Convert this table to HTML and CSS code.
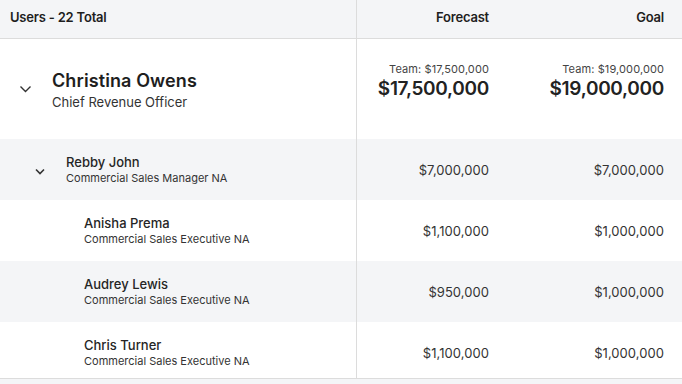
FILE: index.html
```html
<!DOCTYPE html>
<html>
<head>
<meta charset="utf-8">
<link rel="stylesheet" href="styles.css">
</head>
<body>
<div class="table">
  <div class="viewport">
    <div class="row head">
      <div class="cell name-cell"><span class="head-title">Users - 22 Total</span></div>
      <div class="cell num fc">Forecast</div>
      <div class="cell num goal">Goal</div>
    </div>
    <div class="row top">
      <div class="cell name-cell lvl0">
        <svg class="chev big" viewBox="0 0 12 8"><path d="M1 1.5 L6 6.5 L11 1.5" fill="none" stroke="#333" stroke-width="1.4"/></svg>
        <div class="who">
          <div class="n">Christina Owens</div>
          <div class="t">Chief Revenue Officer</div>
        </div>
      </div>
      <div class="cell num fc"><div class="team">Team: $17,500,000</div><div class="amt">$17,500,000</div></div>
      <div class="cell num goal"><div class="team">Team: $19,000,000</div><div class="amt">$19,000,000</div></div>
    </div>
    <div class="row alt">
      <div class="cell name-cell lvl1">
        <svg class="chev small" viewBox="0 0 10 7"><path d="M1 1.5 L5 5.5 L9 1.5" fill="none" stroke="#333" stroke-width="1.6"/></svg>
        <div class="who">
          <div class="n">Rebby John</div>
          <div class="t">Commercial Sales Manager NA</div>
        </div>
      </div>
      <div class="cell num fc">$7,000,000</div>
      <div class="cell num goal">$7,000,000</div>
    </div>
    <div class="row">
      <div class="cell name-cell lvl2">
        <div class="who">
          <div class="n">Anisha Prema</div>
          <div class="t">Commercial Sales Executive NA</div>
        </div>
      </div>
      <div class="cell num fc">$1,100,000</div>
      <div class="cell num goal">$1,000,000</div>
    </div>
    <div class="row alt">
      <div class="cell name-cell lvl2">
        <div class="who">
          <div class="n">Audrey Lewis</div>
          <div class="t">Commercial Sales Executive NA</div>
        </div>
      </div>
      <div class="cell num fc">$950,000</div>
      <div class="cell num goal">$1,000,000</div>
    </div>
    <div class="row">
      <div class="cell name-cell lvl2">
        <div class="who">
          <div class="n">Chris Turner</div>
          <div class="t">Commercial Sales Executive NA</div>
        </div>
      </div>
      <div class="cell num fc">$1,100,000</div>
      <div class="cell num goal">$1,000,000</div>
    </div>
  </div>
  <div class="footer"></div>
</div>
</body>
</html>
```
FILE: styles.css
```css
* { box-sizing: border-box; }
html, body { margin: 0; padding: 0; }
body {
  width: 682px;
  height: 384px;
  overflow: hidden;
  background: #fff;
  font-family: Inter, Lato, sans-serif;
  color: #2b2b2b;
}
.table { display: flex; flex-direction: column; }
.viewport {
  height: 378px;
  overflow: hidden;
  display: flex;
  flex-direction: column;
}
.row {
  display: grid;
  grid-template-columns: 357px 150px 175px;
  height: 61px;
  flex: none;
}
.row.alt { background: #f4f5f7; }
.cell {
  display: flex;
  align-items: center;
}
.name-cell { border-right: 1px solid #dcdcdc; }
.num {
  justify-content: flex-end;
  padding-right: 18px;
  font-size: 13px;
  color: #333;
  letter-spacing: 0.05px;
}
.head {
  height: 39px;
  background: #f4f5f7;
  border-bottom: 1px solid #dcdcdc;
}
.head .cell { padding-bottom: 5px; }
.head-title { padding-left: 10px; font-size: 13px; font-weight: 600; color: #1e1e1e; letter-spacing: -0.2px; }
.head .num { font-size: 13px; font-weight: 600; color: #1e1e1e; letter-spacing: -0.2px; }
.top { height: 100px; }
.top .num {
  flex-direction: column;
  align-items: flex-end;
  justify-content: flex-start;
  padding-top: 23px;
}
.team { font-size: 11px; color: #444; line-height: 14px; letter-spacing: 0.1px; }
.amt { font-size: 19px; font-weight: 600; color: #222; line-height: 24px; margin-top: 1px; letter-spacing: -0.3px; }
.lvl0 { padding-left: 19px; padding-top: 2px; }
.lvl1 { padding-left: 35px; padding-top: 1px; }
.lvl2 { padding-left: 84px; padding-top: 1px; }
.chev.big { width: 13px; height: 8px; margin-right: 20px; margin-bottom: 3px; }
.chev.small { width: 10px; height: 7px; margin-right: 21px; margin-top: 2px; }
.who { display: flex; flex-direction: column; }
.n { font-size: 13px; font-weight: 500; color: #252525; line-height: 16px; }
.t { font-size: 11px; color: #333; line-height: 15px; margin-top: 1px; }
.lvl0 .n { font-size: 18px; line-height: 24px; font-weight: 600; color: #1e1e1e; letter-spacing: 0.1px; }
.lvl0 .t { font-size: 13px; line-height: 17px; margin-top: 1px; }
.footer { height: 6px; background: #f4f5f7; border-top: 1px solid #dcdcdc; flex: none; }
```
